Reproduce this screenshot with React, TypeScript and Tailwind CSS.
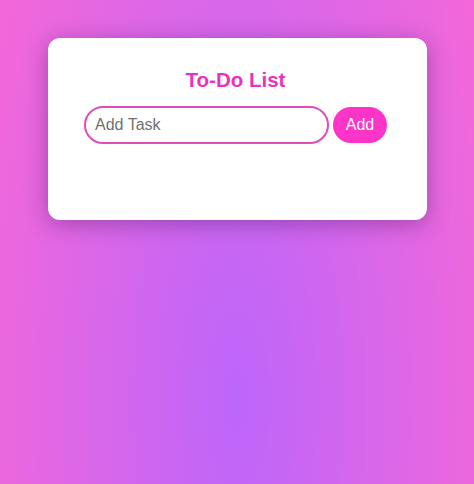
export default function App() {
  return (
    <div className="min-h-screen w-full bg-[radial-gradient(ellipse_300px_820px_at_50%_400px,#bd66fb,#f868d6)] pt-[38px] font-['Liberation_Sans',Arial,sans-serif]">
      <div className="mx-auto flex h-[182px] w-[379px] flex-col items-center rounded-xl bg-white pr-[3px] pt-[30px] shadow-[0_4px_22px_rgba(70,20,90,0.4)]">
        <h1 className="text-[20.5px] font-bold leading-6 text-[#e535c0]">To-Do List</h1>
        <div className="mt-[14px] flex items-center gap-[4px]">
          <input
            type="text"
            placeholder="Add Task"
            className="h-[38px] w-[245px] rounded-full border-2 border-[#e04cb8] bg-white px-[9px] text-[16px] text-gray-800 outline-none placeholder:text-[#707070]"
          />
          <button className="h-[36px] w-[54px] rounded-full bg-[#fc35c8] text-[16px] text-white">
            Add
          </button>
        </div>
      </div>
    </div>
  );
}
